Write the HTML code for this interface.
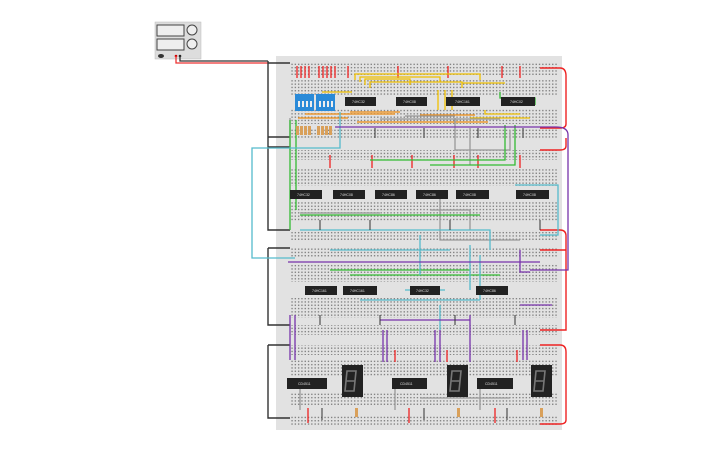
<!DOCTYPE html>
<html><head><style>
html,body{margin:0;padding:0;background:#fff;width:725px;height:453px;overflow:hidden}
svg{display:block}
text{font-family:"Liberation Sans",sans-serif}
</style></head><body>
<svg width="725" height="453" viewBox="0 0 725 453" xmlns="http://www.w3.org/2000/svg">
<defs>
<pattern id="h" width="3.3" height="3.3" patternUnits="userSpaceOnUse"><rect x="1" y="1" width="1.3" height="1.3" fill="#777"/></pattern>
</defs>
<rect x="155" y="22" width="46" height="37" fill="#ddd" stroke="#bbb" stroke-width="0.5"/>
<rect x="157" y="25" width="27" height="11" fill="#eee" stroke="#444"/>
<rect x="157" y="39" width="27" height="11" fill="#eee" stroke="#444"/>
<circle cx="192" cy="30" r="5" fill="#eee" stroke="#444"/>
<circle cx="192" cy="44" r="5" fill="#eee" stroke="#444"/>
<ellipse cx="161" cy="56" rx="3" ry="2" fill="#333"/>
<circle cx="176" cy="56" r="1.3" fill="#c00"/><circle cx="180" cy="56" r="1.3" fill="#222"/>
<path d="M176 56 V63 H268" stroke="#e33" stroke-width="1.3" fill="none"/>
<path d="M180 56 V61 H268" stroke="#333" stroke-width="1.3" fill="none"/>
<rect x="276" y="56" width="286" height="374" fill="#e2e2e2"/>
<g fill="url(#h)">
<rect x="290" y="62" width="268" height="14"/><rect x="290" y="80" width="268" height="16"/><rect x="290" y="108" width="268" height="16"/><rect x="290" y="128" width="268" height="10"/>
<rect x="290" y="150" width="268" height="10"/><rect x="290" y="168" width="268" height="18"/><rect x="290" y="202" width="268" height="20"/><rect x="290" y="230" width="268" height="10"/>
<rect x="290" y="248" width="268" height="10"/><rect x="290" y="264" width="268" height="18"/><rect x="290" y="298" width="268" height="20"/><rect x="290" y="325" width="268" height="10"/>
<rect x="290" y="345" width="268" height="10"/><rect x="290" y="360" width="268" height="16"/><rect x="290" y="392" width="268" height="14"/><rect x="290" y="415" width="268" height="10"/>
</g>
<g fill="none" stroke="#333" stroke-width="1.4">
<path d="M268 63 H290 M268 61 V137 H290 M268 147 H290 M268 137 V230 H290 M268 248 H290 M268 248 V325 H290 M268 345 H290 M268 345 V418 H290"/>
</g>
<g fill="none" stroke="#e22" stroke-width="1.4">
<path d="M540 68 H560 Q566 68 566 76 V124 Q566 128 560 128 H540 M540 150 H560 Q566 150 566 146 V138 M540 230 H560 Q566 230 566 236 V250 H540 M566 250 V330 H540 M540 345 H560 Q566 345 566 352 V420 Q566 424 560 424 H540"/>
</g>
<g stroke="#e22" stroke-width="1.3">
<path d="M297 66V78 M301 66V78 M305 66V78 M309 66V78 M319 66V78 M323 66V78 M327 66V78 M331 66V78 M335 66V78 M348 66V78 M398 66V78 M448 66V78 M502 66V78 M520 66V78 M330 155V168 M372 155V168 M412 155V168 M454 155V168 M478 155V168 M520 155V168 M395 350V362 M447 350V362 M517 350V362 M308 408V423 M409 408V423 M495 408V423"/>
</g>
<g fill="none" stroke="#f0c000" stroke-width="1.3">
<path d="M355 80V74H480V80 M360 82V77H440V82 M365 85V79H410V85 M370 88V82H462V88 M462 83H505 M438 90V110 M445 90V110 M452 90V110 M485 110V114H520 M322 92H352 M470 118H530"/>
</g>
<g fill="none" stroke="#f08c10" stroke-width="1.3">
<path d="M298 118H348 M305 114H395 M350 112H400 M357 122H460 M420 115H475 M440 122H488"/>
</g>
<g fill="none" stroke="#999" stroke-width="1.3">
<path d="M405 116H455 M380 119H500 M455 118V150H510V130 M470 128V165 M290 118V150 M430 210H470V230 M300 213H380 M440 198V240H520 M300 380V410 M395 380V410 M480 380V410 M420 398H510"/>
</g>
<g fill="none" stroke="#3b3" stroke-width="1.3">
<path d="M290 120V230 M296 120V210 M500 92V98H535V105 M505 125V160H370 M515 125V165H430 M300 215H480 M330 270H470 M350 275H500"/>
</g>
<g fill="none" stroke="#5bc" stroke-width="1.3">
<path d="M340 112V148H252V258H295 M330 250H450 M420 235V275 M470 245V290 M480 255V300 M515 185H558V235H540 M300 230H490V250 M405 290H445 M360 300H480 M440 305V330"/>
</g>
<g fill="none" stroke="#73a" stroke-width="1.3">
<path d="M335 127H556Q568 127 568 135V270H530 M288 262H540 M380 320H470 M290 315V360 M295 315V360 M383 330V362 M387 330V362 M435 330V362 M440 330V362 M470 315V362 M523 330V360 M527 330V360 M520 250V272H530 M520 305H552"/>
</g>
<g stroke="#333" stroke-width="1">
<path d="M375 128V138 M424 128V138 M478 128V138 M523 128V138 M320 220V230 M370 220V230 M450 220V230 M540 220V230 M320 315V325 M380 315V325 M455 315V325 M515 315V325 M322 408V420 M424 408V420 M507 408V420"/>
</g>
<rect x="295" y="94" width="19" height="17" fill="#2a8ad8"/>
<rect x="316" y="94" width="19" height="17" fill="#2a8ad8"/>
<g fill="#eee"><rect x="298" y="101" width="2" height="6"/><rect x="302" y="101" width="2" height="6"/><rect x="306" y="101" width="2" height="6"/><rect x="310" y="101" width="2" height="6"/><rect x="319" y="101" width="2" height="6"/><rect x="323" y="101" width="2" height="6"/><rect x="327" y="101" width="2" height="6"/><rect x="331" y="101" width="2" height="6"/></g>
<g fill="#d9a05a"><rect x="296" y="126" width="3" height="9"/><rect x="300" y="126" width="3" height="9"/><rect x="304" y="126" width="3" height="9"/><rect x="308" y="126" width="3" height="9"/><rect x="317" y="126" width="3" height="9"/><rect x="321" y="126" width="3" height="9"/><rect x="325" y="126" width="3" height="9"/><rect x="329" y="126" width="3" height="9"/>
<rect x="355" y="408" width="3" height="9"/><rect x="457" y="408" width="3" height="9"/><rect x="540" y="408" width="3" height="9"/></g>
<g fill="#222">
<rect x="345" y="97" width="31" height="9"/><rect x="396" y="97" width="31" height="9"/><rect x="446" y="97" width="34" height="9"/><rect x="501" y="97" width="34" height="9"/>
<rect x="290" y="190" width="32" height="9"/><rect x="333" y="190" width="32" height="9"/><rect x="375" y="190" width="32" height="9"/><rect x="416" y="190" width="32" height="9"/><rect x="456" y="190" width="33" height="9"/><rect x="516" y="190" width="33" height="9"/>
<rect x="305" y="286" width="32" height="9"/><rect x="343" y="286" width="34" height="9"/><rect x="410" y="286" width="30" height="9"/><rect x="476" y="286" width="32" height="9"/>
<rect x="287" y="378" width="40" height="11"/><rect x="392" y="378" width="35" height="11"/><rect x="477" y="378" width="36" height="11"/>
<rect x="342" y="365" width="21" height="32"/><rect x="447" y="365" width="21" height="32"/><rect x="531" y="365" width="21" height="32"/>
</g>
<g fill="#ddd" font-size="3.5">
<text x="352" y="103">74HC32</text><text x="403" y="103">74HC08</text><text x="455" y="103">74HC161</text><text x="510" y="103">74HC02</text>
<text x="297" y="196">74HC32</text><text x="340" y="196">74HC08</text><text x="382" y="196">74HC86</text><text x="423" y="196">74HC86</text><text x="463" y="196">74HC08</text><text x="523" y="196">74HC08</text>
<text x="312" y="292">74HC161</text><text x="350" y="292">74HC161</text><text x="416" y="292">74HC32</text><text x="483" y="292">74HC86</text>
<text x="298" y="385">CD4511</text><text x="400" y="385">CD4511</text><text x="485" y="385">CD4511</text>
</g>
<g fill="none" stroke="#777" stroke-width="1.6">
<path d="M347 371H356L355 381L354 391H345L346 381ZM346 381H355"/>
<path d="M452 371H461L460 381L459 391H450L451 381ZM451 381H460"/>
<path d="M536 371H545L544 381L543 391H534L535 381ZM535 381H544"/>
</g>
</svg>
</body></html>
